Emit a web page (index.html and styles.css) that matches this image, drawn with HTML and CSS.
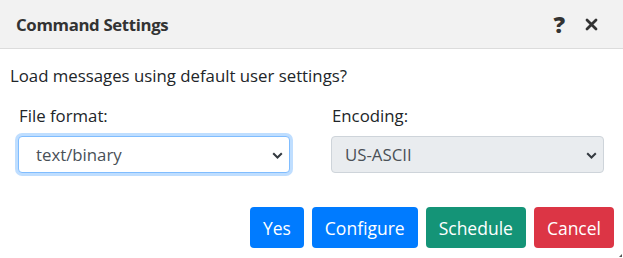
FILE: index.html
```html
<!DOCTYPE html>
<html>
<head>
<meta charset="utf-8">
<link rel="stylesheet" href="styles.css">
</head>
<body>
<div class="dialog">
  <div class="header">
    <div class="title">Command Settings</div>
    <div class="tools">
      <span class="help">?</span>
      <svg class="close" width="13" height="13" viewBox="0 0 13 13"><path d="M2 2 L11 11 M11 2 L2 11" stroke="#333" stroke-width="2.8" stroke-linecap="round"/></svg>
    </div>
  </div>
  <div class="body">
    <p class="prompt">Load messages using default user settings?</p>
    <div class="fields">
      <div class="field">
        <label class="label">File format:</label>
        <div class="select-wrap">
          <select class="select focused"><option>text/binary</option></select>
          <svg class="chev" width="11" height="7" viewBox="0 0 11 7"><path d="M1.2 1.2 L5.5 5.5 L9.8 1.2" fill="none" stroke="#343a40" stroke-width="2"/></svg>
        </div>
      </div>
      <div class="field">
        <label class="label">Encoding:</label>
        <div class="select-wrap">
          <select class="select disabled" disabled><option>US-ASCII</option></select>
          <svg class="chev" width="11" height="7" viewBox="0 0 11 7"><path d="M1.2 1.2 L5.5 5.5 L9.8 1.2" fill="none" stroke="#343a40" stroke-width="2"/></svg>
        </div>
      </div>
    </div>
    <div class="actions">
      <button class="btn btn-blue">Yes</button>
      <button class="btn btn-blue">Configure</button>
      <button class="btn btn-green">Schedule</button>
      <button class="btn btn-red">Cancel</button>
    </div>
  </div>
  <span class="grip"></span>
</div>
</body>
</html>
```
FILE: styles.css
```css
html, body {
  margin: 0;
  padding: 0;
  background: #fff;
}
body {
  font-family: "Open Sans", "Noto Sans", sans-serif;
  color: #212529;
}
.dialog {
  position: relative;
  width: 623px;
  height: 258px;
  overflow: hidden;
}
.header {
  height: 48px;
  background: #f2f2f2;
  border-bottom: 1px solid #dcdcdc;
  display: flex;
  align-items: center;
  padding: 0 25px 0 16px;
}
.title {
  font-weight: 700;
  font-size: 16.8px;
  letter-spacing: -0.35px;
  color: #333;
}
.tools {
  margin-left: auto;
  display: flex;
  align-items: center;
  gap: 20px;
}
.help {
  font-weight: 800;
  font-size: 23px;
  color: #333;
  line-height: 1;
}
.close {
  display: block;
}
.body {
  padding: 15px 9px 0 10px;
}
.prompt {
  margin: 0;
  font-size: 16.8px;
  line-height: 24px;
}
.fields {
  margin: 16px 0 0 8px;
  display: grid;
  grid-template-columns: 272px 273px;
  column-gap: 41px;
}
.label {
  display: block;
  font-size: 16.8px;
  line-height: 24px;
  padding-left: 1px;
  margin-bottom: 8px;
}
.select-wrap {
  position: relative;
}
.select {
  appearance: none;
  -webkit-appearance: none;
  display: block;
  width: 100%;
  height: 37px;
  margin: 0;
  font-family: inherit;
  font-size: 16.8px;
  color: #495057;
  background: #fff;
  border: 1px solid #ced4da;
  border-radius: 4px;
  padding: 0 30px 0 17px;
  outline: none;
}
.select.focused {
  border-color: #80bdff;
  box-shadow: 0 0 0 3px rgba(0, 123, 255, 0.25);
}
.select.disabled {
  background: #e9ecef;
  color: #495057;
  opacity: 1;
  padding-left: 13px;
}
.chev {
  position: absolute;
  right: 7px;
  top: 16px;
  pointer-events: none;
}
.actions {
  margin-top: 34px;
  display: flex;
  justify-content: flex-end;
  gap: 8px;
}
.btn {
  font-family: inherit;
  font-size: 17.5px;
  color: #fff;
  height: 41px;
  border: none;
  border-radius: 4px;
  padding: 0 13px;
  margin: 0;
}
.btn-blue {
  background: #007bff;
}
.btn-green {
  background: #149477;
}
.btn-red {
  background: #dc3545;
}
.grip {
  position: absolute;
  right: 1px;
  bottom: 1px;
  width: 0;
  height: 0;
  border-left: 3px solid transparent;
  border-bottom: 3px solid #555;
}
```
